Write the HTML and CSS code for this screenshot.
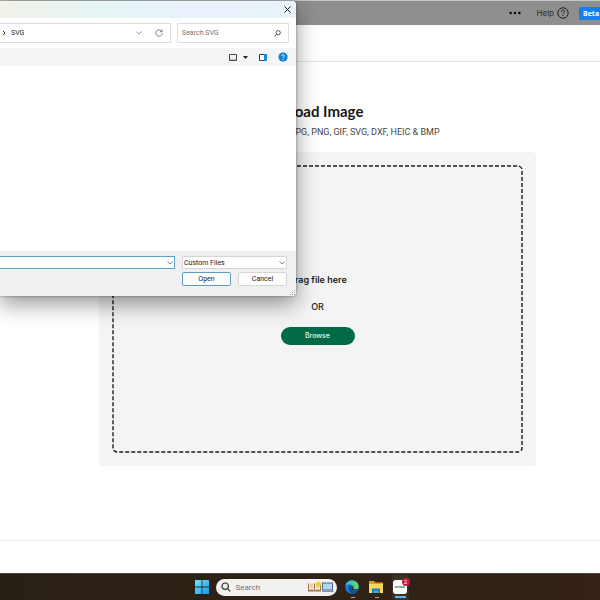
FILE: index.html
```html
<!DOCTYPE html>
<html lang="en">
<head>
<meta charset="utf-8">
<title>Upload Image</title>
<link rel="stylesheet" href="styles.css">
</head>
<body>
<div class="desktop">
  <header class="appbar">
    <button class="more" aria-label="More"><svg width="12" height="4" viewBox="0 0 12 4"><circle cx="1.6" cy="2" r="1.2"/><circle cx="6" cy="2" r="1.2"/><circle cx="10.4" cy="2" r="1.2"/></svg></button>
    <a class="help" href="#">Help
      <svg width="12" height="12" viewBox="0 0 12 12" fill="none" stroke="#202020"><circle cx="6" cy="6" r="5.2"/><path d="M4.4 4.8C4.4 2.6 7.6 2.6 7.6 4.7C7.6 5.8 6 5.8 6 7.1M6 8V9"/></svg>
    </a>
    <span class="beta">Beta</span>
  </header>
  <div class="subbar"></div>
  <main class="upload">
    <h1>Upload Image</h1>
    <p class="types">Upload these file types: JPG, PNG, GIF, SVG, DXF, HEIC &amp; BMP</p>
    <section class="panel">
      <div class="drop">
        <svg class="dash" width="100%" height="100%"><rect width="100%" height="100%" rx="4"/></svg>
        <strong>Drag file here</strong>
        <span class="or">OR</span>
        <button class="browse">Browse</button>
      </div>
    </section>
  </main>
  <footer class="appfoot"></footer>
  <nav class="taskbar">
    <button aria-label="Start"><svg width="14" height="14" viewBox="0 0 14 14"><defs><linearGradient id="win" x2="1" y2="1"><stop stop-color="#72e0ff"/><stop offset="1" stop-color="#159bea"/></linearGradient></defs><path fill="url(#win)" d="M0 0h6.6v6.6H0zM7.4 0H14v6.6H7.4zM0 7.4h6.6V14H0zM7.4 7.4H14V14H7.4z"/></svg></button>
    <label class="tasksearch">
      <svg width="10" height="10" viewBox="0 0 10 10" fill="none" stroke="#303030" stroke-width="1.2"><circle cx="4.2" cy="4.2" r="3.2"/><path d="M6.6 6.6L9.3 9.3"/></svg>
      <input type="text" placeholder="Search" aria-label="Search">
      <svg width="26" height="12" viewBox="0 0 26 12"><path fill="#9d7348" d="M0 2.5h13v8H0z"/><path fill="#f5ead0" d="M1 2Q4 1 6 2.5V9.5Q4 8 1 9zM12 2Q9 1 7 2.5V9.5Q9 8 12 9z"/><path stroke="#a99b80" stroke-width=".6" d="M2 4h3M2 6h3M8 6h3"/><circle cx="10.5" cy="3" r="2.5" fill="#e7cf2d"/><path fill="#4d6285" d="M14 1.5h11v8H14z"/><path fill="#b2d5fa" d="M15 2.5h9v6h-9z"/><path fill="#8b94a5" d="M14 9.5h11l1 1.5H14z"/></svg>
    </label>
    <button class="running" aria-label="Edge"><svg width="14" height="14" viewBox="0 0 14 14"><defs><linearGradient id="edge" x2="1"><stop stop-color="#27b5e8"/><stop offset="1" stop-color="#68dc55"/></linearGradient></defs><circle cx="7" cy="7" r="6.8" fill="#137bd0"/><path fill="url(#edge)" d="M.3 6C1-.5 12-2 13.7 6C14 9.5 10.4 9.8 8.5 8.6C9.5 7.7 9 5.6 7 5C4.5 4.2 1.5 4 .3 6z"/><path fill="#0d4aa0" d="M4.5 5.5C2 9 5 13.5 9 13.4C11 13 12.3 12 13 10.5C9 12.5 5 10.5 6 7L7 5.1Q5.5 4.7 4.5 5.5z"/><path fill="#2b2115" d="M7 6.5C5.7 8 7 10.7 10 10.6C11.5 10.6 12.6 9.9 13.2 9.2C11 10 8 9.5 7.9 8.5Q8.8 7.2 7 6.5z"/></svg></button>
    <button class="running" aria-label="File Explorer"><svg width="14" height="14" viewBox="0 0 14 14"><path fill="#e29b1f" d="M0 1h5l1.5 1.5H14V6H0z"/><path fill="#ffd75b" d="M0 4h14v9H0z"/><path fill="#187bc0" d="M3 8.5h8V13H3z"/><path fill="#4aa6dc" d="M4.5 10.5h5V13h-5z"/></svg></button>
    <button class="running active" aria-label="Design Space"><span class="tile">cricut</span><span class="badge">2</span></button>
  </nav>

  <div class="dialog" role="dialog" aria-label="Open">
    <div class="title"><button aria-label="Close"><svg width="7" height="7" viewBox="0 0 7 7" fill="none" stroke="#222"><path d="M.5 .5L6.5 6.5M6.5 .5L.5 6.5"/></svg></button></div>
    <div class="nav">
      <div class="path">
        <svg width="4" height="6" viewBox="0 0 4 6" fill="none" stroke="#333"><path d="M1 1L3 3L1 5"/></svg>
        <span>SVG</span>
        <svg width="6" height="4" viewBox="0 0 6 4" fill="none" stroke="#777" stroke-width=".8"><path d="M.5 .5L3 3L5.5 .5"/></svg>
        <svg width="8" height="8" viewBox="0 0 8 8" fill="none" stroke="#666" stroke-width=".8"><path d="M6.8 2.5A3.2 3.2 0 1 0 7.2 4.3M7 .5V2.7H4.8"/></svg>
      </div>
      <label class="find">
        <input type="text" placeholder="Search SVG" aria-label="Search SVG">
        <svg width="7" height="7" viewBox="0 0 7 7" fill="none" stroke="#444" stroke-width=".9"><circle cx="4.2" cy="2.7" r="2.1"/><path d="M2.7 4.3L.5 6.5"/></svg>
      </label>
    </div>
    <div class="tools">
      <button class="view" aria-label="View">
        <svg width="8" height="7" viewBox="0 0 8 7"><path fill="none" stroke="#444" d="M.5 .5h7v6h-7z"/><path stroke="#888" stroke-width=".6" d="M1 5.2h6"/></svg>
        <svg width="5" height="3" viewBox="0 0 5 3"><path fill="#222" d="M0 0h5L2.5 3z"/></svg>
      </button>
      <button aria-label="Preview pane"><svg width="8" height="7" viewBox="0 0 8 7"><path fill="#fff" stroke="#345" d="M.5 .5h7v6h-7z"/><path fill="#168bdc" d="M5 0h3v7H5z"/></svg></button>
      <button aria-label="Get help"><svg width="10" height="10" viewBox="0 0 10 10"><circle cx="5" cy="5" r="4.6" fill="#0f7fd0"/><path fill="none" stroke="#fff" stroke-width=".9" d="M3.6 4C3.6 2.2 6.4 2.2 6.4 3.9C6.4 4.8 5 4.8 5 6M5 7V8"/></svg></button>
    </div>
    <div class="files"></div>
    <div class="actions">
      <label class="combo name"><input type="text" aria-label="File name"><svg width="6" height="4" viewBox="0 0 6 4" fill="none" stroke="#666" stroke-width=".8"><path d="M.5 .5L3 3L5.5 .5"/></svg></label>
      <div class="choices">
        <label class="combo"><select aria-label="File type"><option>Custom Files</option></select><svg width="6" height="4" viewBox="0 0 6 4" fill="none" stroke="#666" stroke-width=".8"><path d="M.5 .5L3 3L5.5 .5"/></svg></label>
        <div class="buttons"><button class="primary">Open</button><button>Cancel</button></div>
      </div>
      <svg class="grip" width="6" height="6" viewBox="0 0 6 6"><path fill="#aaa" d="M4 0h1v1H4zM2 2h1v1H2zM4 2h1v1H4zM0 4h1v1H0zM2 4h1v1H2zM4 4h1v1H4z"/></svg>
    </div>
  </div>
</div>
</body>
</html>
```
FILE: styles.css
```css
* { box-sizing: border-box; }
body { margin: 0; font-family: "Open Sans", "Noto Sans", sans-serif; color: #222; }
button, input, select { font: inherit; color: inherit; border: 0; padding: 0; margin: 0; background: none; outline: 0; }
button { display: flex; align-items: center; justify-content: center; }
svg { display: block; flex: none; }

.desktop { position: relative; overflow: hidden; min-height: 100vh; display: flex; flex-direction: column; background: #fff; }
.appbar { height: 25px; background: #8e8e8e; border-top: 1px solid #c5c8c5; display: flex; align-items: center; justify-content: flex-end; }
.more { margin-right: 16px; }
.help { display: flex; align-items: center; gap: 3px; margin-right: 10px; color: #303030; font: 8px Inter, sans-serif; text-decoration: none; }
.beta { width: 21px; height: 13px; padding-left: 4px; border-radius: 2px 0 0 2px; background: #1680e8; color: #fff; font: bold 7px/13px "Open Sans", sans-serif; }
.subbar { height: 37px; border-bottom: 1px solid #e4e4e4; }

.upload { flex: 1; display: flex; flex-direction: column; padding: 41px 64px 74px 99px; text-align: center; white-space: nowrap; }
h1 { margin: 0; font: bold 15px/16px Lato, sans-serif; color: #171719; }
.types { align-self: center; margin: 7px 0 13px; font: 9px/13px Roboto, sans-serif; color: #454545; }
.panel { flex: 1; display: flex; padding: 14px; border-radius: 4px; background: #f4f4f4; }
.drop { flex: 1; position: relative; display: flex; flex-direction: column; align-items: center; justify-content: center; font: 9px/12px Inter, sans-serif; }
.drop strong { font-weight: 600; }
.dash { position: absolute; inset: 0; overflow: visible; fill: none; stroke: #1c1c1c; stroke-width: 1.4; stroke-dasharray: 4 2; }
.or { margin: 15px 0 14px; font-weight: 500; }
.browse { width: 74px; height: 18px; border-radius: 9px; background: #006b45; color: #e5f3ed; font: 500 7px Inter, sans-serif; }

.appfoot { height: 33px; border-top: 1px solid #ebebeb; }
.taskbar { height: 27px; display: flex; align-items: center; justify-content: center; gap: 7px; padding-left: 3px; background: linear-gradient(90deg, #292015, #302216 60%, #352116); border-top: 1px solid #51483d; }
.tasksearch { width: 121px; height: 17px; padding: 0 3px 0 5px; display: flex; align-items: center; gap: 5px; border-radius: 9px; background: #f3f1ef; }
.tasksearch input { flex: 1; min-width: 0; font: 8px Roboto, sans-serif; }
input::placeholder { color: #737373; opacity: 1; }
.running { position: relative; width: 17px; height: 25px; }
.running::after { content: ""; position: absolute; bottom: 2px; left: 7px; width: 4px; height: 1px; background: #b8a78c; }
.running.active { background: #3c3024; border-radius: 3px; }
.running.active::after { left: 3px; width: 11px; height: 2px; background: #55bde8; }
.tile { width: 14px; height: 14px; border-radius: 3px; background: #fff; color: #15824c; font: bold 4px/14px Roboto, sans-serif; }
.badge { position: absolute; top: 3px; right: -1px; width: 8px; height: 8px; border-radius: 50%; background: #c51e3a; color: #fff; font-size: 6px; line-height: 8px; }

.dialog { position: absolute; top: 1px; left: 0; width: 296px; height: 295px; display: flex; flex-direction: column; overflow: hidden; border-radius: 0 4px 4px 0; background: #fff; font: 7px Roboto, sans-serif; box-shadow: 0 8px 22px rgba(0, 0, 0, .42), 0 0 3px rgba(0, 0, 0, .4); }
.title { height: 17px; padding-right: 5px; display: flex; justify-content: flex-end; background: linear-gradient(90deg, #f1f3e9, #e6f5f6 35%, #eaf2fc 65%, #e8f4f8); }
.nav { height: 30px; padding: 5px 7px 5px 0; display: flex; gap: 6px; }
.path, .find { display: flex; align-items: center; border: 1px solid #dedede; background: #fff; }
.path { flex: 1; border-left: 0; padding: 0 7px 0 2px; gap: 5px; }
.path span { flex: 1; }
.path svg:last-child { margin-left: 8px; }
.find { width: 112px; padding: 0 7px 0 4px; }
.find input { flex: 1; min-width: 0; }
.tools { height: 18px; padding-right: 8px; display: flex; align-items: center; justify-content: flex-end; gap: 11px; background: #f4f5f7; }
.view { gap: 6px; }
.files { flex: 1; }
.actions { position: relative; height: 45px; padding: 5px 9px 0 0; display: flex; gap: 7px; background: #f0f0f0; }
.combo { height: 13px; display: flex; align-items: center; padding: 0 1px; border: 1px solid #d4d4d4; border-radius: 1px; background: #fff; }
.combo input, .combo select { flex: 1; min-width: 0; appearance: none; }
.combo.name { flex: 1; border-color: #5ca0bd; border-left: 0; }
.choices { width: 105px; display: flex; flex-direction: column; gap: 3px; }
.buttons { display: flex; gap: 7px; }
.buttons button { flex: 1; height: 14px; border: 1px solid #d5d5d5; border-radius: 2px; background: #fdfdfd; }
.buttons .primary { border-color: #5ca0bd; }
.grip { position: absolute; right: 0; bottom: 0; }
```
